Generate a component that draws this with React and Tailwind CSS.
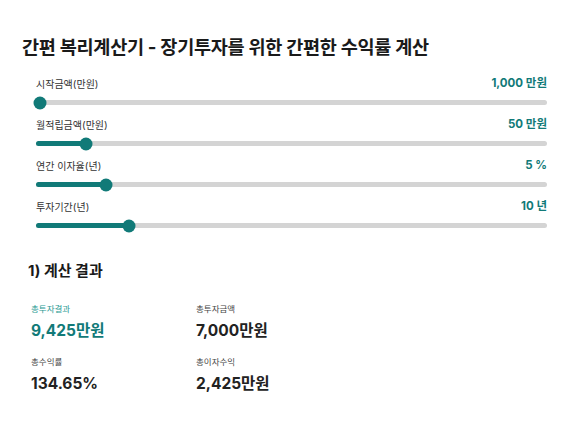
import React from 'react'

const sliders = [
  { label: '시작금액(만원)', value: '1,000 만원', pct: 0.8 },
  { label: '월적립금액(만원)', value: '50 만원', pct: 9.8 },
  { label: '연간 이자율(년)', value: '5 %', pct: 13.7 },
  { label: '투자기간(년)', value: '10 년', pct: 18.2 },
]

const results = [
  { label: '총투자결과', value: '9,425만원', accent: true },
  { label: '총투자금액', value: '7,000만원' },
  { label: '총수익률', value: '134.65%' },
  { label: '총이자수익', value: '2,425만원' },
]

function Slider({ label, value, pct }) {
  return (
    <div className="flex flex-col">
      <div className="flex items-center justify-between h-[16px]">
        <span className="text-[10px] text-[#333]">{label}</span>
        <span className="text-[11.5px] font-bold text-[#117a78]">{value}</span>
      </div>
      <div className="relative h-[5px] mt-[8px] rounded-full bg-[#d4d4d4]">
        <div className="absolute left-0 top-0 h-full rounded-full bg-[#117a78]" style={{ width: pct + '%' }} />
        <div
          className="absolute top-1/2 w-[13px] h-[13px] -translate-x-1/2 -translate-y-1/2 rounded-full bg-[#117a78]"
          style={{ left: pct + '%' }}
        />
      </div>
    </div>
  )
}

export default function App() {
  return (
    <div
      className="w-[584px] h-[422px] bg-white text-[#1a1a1a]"
      style={{ fontFamily: 'Inter, "Noto Sans CJK KR", sans-serif' }}
    >
      <h1 className="pl-[22px] pt-[34px] text-[18.6px] leading-[26px] font-bold tracking-[-0.3px]">
        간편 복리계산기 - 장기투자를 위한 간편한 수익률 계산
      </h1>

      <div className="mx-[36px] mt-[16px] w-[511px] flex flex-col gap-[12px]">
        {sliders.map((s) => (
          <Slider key={s.label} {...s} />
        ))}
      </div>

      <h2 className="pl-[28px] mt-[32px] text-[15px] leading-[22px] font-bold">1) 계산 결과</h2>

      <div className="pl-[31px] mt-[21px] grid grid-cols-[165px_165px] gap-y-[15px]">
        {results.map((r) => (
          <div key={r.label} className="flex flex-col">
            <span className={'text-[8.5px] leading-[12px] ' + (r.accent ? 'text-[#2a9a93]' : 'text-[#444]')}>
              {r.label}
            </span>
            <span
              className={
                'mt-[6px] text-[15.5px] leading-[20px] font-bold ' + (r.accent ? 'text-[#117a78]' : 'text-[#222]')
              }
            >
              {r.value}
            </span>
          </div>
        ))}
      </div>
    </div>
  )
}
